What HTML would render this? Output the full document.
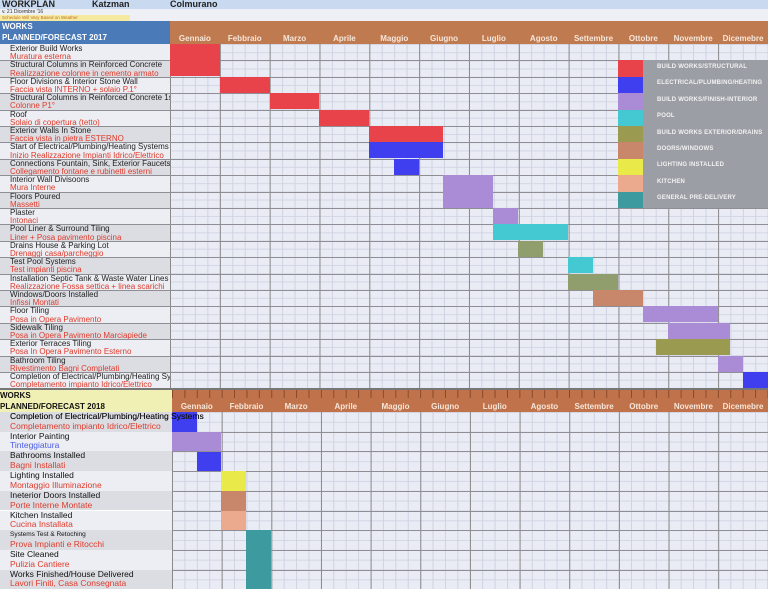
<!DOCTYPE html>
<html><head><meta charset="utf-8"><style>
*{margin:0;padding:0;box-sizing:border-box}
body{width:768px;height:589px;overflow:hidden;background:#fff;position:relative;font-family:"Liberation Sans",Arial,sans-serif}
div{position:absolute}
.grid{background-color:#e9ecf5;
background-image:linear-gradient(to right,#8a8a8a 1px,transparent 1px),linear-gradient(to right,#cfd3e2 1px,transparent 1px),linear-gradient(to bottom,#d3d6e4 1px,transparent 1px);
background-size:49.83px 100%,12.46px 100%,100% 8.2px}
.row{left:0;width:768px;border-top:1px solid #8e8e94}
.lab{left:0;width:170px;font-size:8px;line-height:8.2px;padding-left:10px;padding-top:1px;white-space:nowrap;overflow:hidden}
.lab b{font-weight:normal;color:#222;display:block}
.lab i{font-style:normal;color:#e03a2a;display:block}
.g{background:#dcdde3}.w{background:#eceef3}
.mh{top:21px;height:23px;background:#c07a50;left:170px;width:598px}
.mn{font-size:8px;font-weight:bold;color:#f6e6da;width:49.83px;text-align:center}
.leg{left:643px;width:125px;color:#f2f2f2;font-size:6px;font-weight:bold;padding-left:14px;letter-spacing:.2px;line-height:16.4px}
.lab2{left:0;width:172px;font-size:8.5px;line-height:9.8px;padding-left:10px;white-space:nowrap;overflow:visible;z-index:2}
.lab2 b{font-weight:normal;color:#111;display:block}
.lab2 i{font-style:normal;color:#e03a2a;display:block}
</style></head><body>
<div style="left:0;top:0;width:768px;height:9px;background:#c9daf0"></div>
<div style="left:2px;top:-1px;font-size:9px;font-weight:bold;color:#222">WORKPLAN</div>
<div style="left:92px;top:-1px;font-size:9px;font-weight:bold;color:#222">Katzman</div>
<div style="left:170px;top:-1px;font-size:9px;font-weight:bold;color:#222">Colmurano</div>
<div style="left:0;top:9px;width:768px;height:12px;background:#eef0f6"></div>
<div style="left:2px;top:9px;font-size:5px;color:#333">v. 21 Dicembre '16</div>
<div style="left:0;top:15px;width:130px;height:6px;background:#f5eaa0"></div>
<div style="left:2px;top:15px;font-size:4.5px;color:#c07020">Schedule Will Vary Based on Weather</div>
<div style="left:0;top:21px;width:170px;height:23px;background:#4a7ab8"></div>
<div style="left:2px;top:22px;font-size:8px;font-weight:bold;color:#fff">WORKS</div>
<div style="left:2px;top:33px;font-size:8px;font-weight:bold;color:#fff">PLANNED/FORECAST 2017</div>
<div class="mh"></div>
<div style="top:34px;left:170px;width:598px;display:flex">
<div class="mn" style="position:static">Gennaio</div><div class="mn" style="position:static">Febbraio</div><div class="mn" style="position:static">Marzo</div><div class="mn" style="position:static">Aprile</div><div class="mn" style="position:static">Maggio</div><div class="mn" style="position:static">Giugno</div><div class="mn" style="position:static">Luglio</div><div class="mn" style="position:static">Agosto</div><div class="mn" style="position:static">Settembre</div><div class="mn" style="position:static">Ottobre</div><div class="mn" style="position:static">Novembre</div><div class="mn" style="position:static">Dicemebre</div></div>
<div class="grid" style="left:170px;top:44px;width:598px;height:345px"></div>

<div class="lab w" style="top:44px;height:16.4px"><b>Exterior Build Works</b><i>Muratura esterna</i></div>
<div class="lab g" style="top:60.4px;height:16.4px"><b>Structural Columns in Reinforced Concrete</b><i>Realizzazione colonne in cemento armato</i></div>
<div class="lab w" style="top:76.8px;height:16.4px"><b>Floor Divisions &amp; Interior Stone Wall</b><i>Faccia vista INTERNO + solaio P.1°</i></div>
<div class="lab g" style="top:93.2px;height:16.4px"><b>Structural Columns in Reinforced Concrete 1st F</b><i>Colonne P1°</i></div>
<div class="lab w" style="top:109.6px;height:16.4px"><b>Roof</b><i>Solaio di copertura (tetto)</i></div>
<div class="lab g" style="top:126px;height:16.4px"><b>Exterior Walls In Stone</b><i>Faccia vista in pietra ESTERNO</i></div>
<div class="lab w" style="top:142.4px;height:16.4px"><b>Start of Electrical/Plumbing/Heating Systems</b><i>Inizio Realizzazione Impianti Idrico/Elettrico</i></div>
<div class="lab g" style="top:158.8px;height:16.4px"><b>Connections Fountain, Sink, Exterior Faucets</b><i>Collegamento fontane e rubinetti esterni</i></div>
<div class="lab w" style="top:175.2px;height:16.4px"><b>Interior Wall Divisoons</b><i>Mura Interne</i></div>
<div class="lab g" style="top:191.6px;height:16.4px"><b>Floors Poured</b><i>Massetti</i></div>
<div class="lab w" style="top:208px;height:16.4px"><b>Plaster</b><i>Intonaci</i></div>
<div class="lab g" style="top:224.4px;height:16.4px"><b>Pool Liner &amp; Surround Tiling</b><i>Liner + Posa pavimento piscina</i></div>
<div class="lab w" style="top:240.8px;height:16.4px"><b>Drains House &amp; Parking Lot</b><i>Drenaggi casa/parcheggio</i></div>
<div class="lab g" style="top:257.2px;height:16.4px"><b>Test Pool Systems</b><i>Test impianti piscina</i></div>
<div class="lab w" style="top:273.6px;height:16.4px"><b>Installation Septic Tank &amp; Waste Water Lines</b><i>Realizzazione Fossa settica + linea scarichi</i></div>
<div class="lab g" style="top:290px;height:16.4px"><b>Windows/Doors Installed</b><i>Infissi Montati</i></div>
<div class="lab w" style="top:306.4px;height:16.4px"><b>Floor Tiling</b><i>Posa in Opera Pavimento</i></div>
<div class="lab g" style="top:322.8px;height:16.4px"><b>Sidewalk Tiling</b><i>Posa in Opera Pavimento Marciapiede</i></div>
<div class="lab w" style="top:339.2px;height:16.4px"><b>Exterior Terraces Tiling</b><i>Posa In Opera Pavimento Esterno</i></div>
<div class="lab g" style="top:355.6px;height:16.4px"><b>Bathroom Tiling</b><i>Rivestimento Bagni Completati</i></div>
<div class="lab w" style="top:372px;height:17px"><b>Completion of Electrical/Plumbing/Heating Systems</b><i>Completamento impianto Idrico/Elettrico</i></div>

<div class="row" style="top:60.4px"></div><div class="row" style="top:76.8px"></div><div class="row" style="top:93.2px"></div><div class="row" style="top:109.6px"></div><div class="row" style="top:126px"></div><div class="row" style="top:142.4px"></div><div class="row" style="top:158.8px"></div><div class="row" style="top:175.2px"></div><div class="row" style="top:191.6px"></div><div class="row" style="top:208px"></div><div class="row" style="top:224.4px"></div><div class="row" style="top:240.8px"></div><div class="row" style="top:257.2px"></div><div class="row" style="top:273.6px"></div><div class="row" style="top:290px"></div><div class="row" style="top:306.4px"></div><div class="row" style="top:322.8px"></div><div class="row" style="top:339.2px"></div><div class="row" style="top:355.6px"></div><div class="row" style="top:372px"></div>

<div style="left:170px;top:44px;width:50px;height:32px;background:#e8434b"></div>
<div style="left:220px;top:77px;width:50px;height:16px;background:#e8434b"></div>
<div style="left:270px;top:93px;width:49px;height:16px;background:#e8434b"></div>
<div style="left:319px;top:110px;width:50px;height:16px;background:#e8434b"></div>
<div style="left:369px;top:126px;width:74px;height:16px;background:#e8434b"></div>
<div style="left:369px;top:142px;width:74px;height:16px;background:#3f3ff0"></div>
<div style="left:394px;top:159px;width:25px;height:16px;background:#3f3ff0"></div>
<div style="left:443px;top:175px;width:50px;height:33px;background:#a98bd6"></div>
<div style="left:493px;top:208px;width:25px;height:16px;background:#a98bd6"></div>
<div style="left:493px;top:224px;width:75px;height:16px;background:#44c8d2"></div>
<div style="left:518px;top:241px;width:25px;height:16px;background:#8f9e6c"></div>
<div style="left:568px;top:257px;width:25px;height:16px;background:#44c8d2"></div>
<div style="left:568px;top:274px;width:50px;height:16px;background:#8f9e6c"></div>
<div style="left:593px;top:290px;width:50px;height:16px;background:#c8876a"></div>
<div style="left:643px;top:306px;width:75px;height:16px;background:#a98bd6"></div>
<div style="left:668px;top:323px;width:62px;height:16px;background:#a98bd6"></div>
<div style="left:656px;top:339px;width:74px;height:16px;background:#9a9a50"></div>
<div style="left:718px;top:356px;width:25px;height:16px;background:#a98bd6"></div>
<div style="left:743px;top:372px;width:25px;height:16px;background:#3f3ff0"></div>

<div style="left:643px;top:60.4px;width:125px;height:147.6px;background:#9b9ea4"></div>
<div style="left:618px;top:60.4px;width:25px;height:16.4px;background:#e8434b"></div>
<div style="left:618px;top:76.8px;width:25px;height:16.4px;background:#3f3ff0"></div>
<div style="left:618px;top:93.2px;width:25px;height:16.4px;background:#a98bd6"></div>
<div style="left:618px;top:109.6px;width:25px;height:16.4px;background:#44c8d2"></div>
<div style="left:618px;top:126px;width:25px;height:16.4px;background:#9a9a50"></div>
<div style="left:618px;top:142.4px;width:25px;height:16.4px;background:#c8876a"></div>
<div style="left:618px;top:158.8px;width:25px;height:16.4px;background:#e9e94a"></div>
<div style="left:618px;top:175.2px;width:25px;height:16.4px;background:#eba98e"></div>
<div style="left:618px;top:191.6px;width:25px;height:16.4px;background:#3d9a9f"></div>
<div class="leg" style="top:59px">BUILD WORKS/STRUCTURAL</div>
<div class="leg" style="top:75.4px">ELECTRICAL/PLUMBING/HEATING</div>
<div class="leg" style="top:91.8px">BUILD WORKS/FINISH-INTERIOR</div>
<div class="leg" style="top:108.2px">POOL</div>
<div class="leg" style="top:124.6px">BUILD WORKS EXTERIOR/DRAINS</div>
<div class="leg" style="top:141px">DOORS/WINDOWS</div>
<div class="leg" style="top:157.4px">LIGHTING INSTALLED</div>
<div class="leg" style="top:173.8px">KITCHEN</div>
<div class="leg" style="top:190.2px">GENERAL PRE-DELIVERY</div>

<div style="left:0;top:388px;width:768px;height:2px;background:#777"></div>
<div style="left:0;top:390px;width:172px;height:22px;background:#f1f0b4"></div>
<div style="left:0;top:391px;font-size:8px;font-weight:bold;color:#111">WORKS</div>
<div style="left:0;top:402px;font-size:8px;font-weight:bold;color:#111">PLANNED/FORECAST 2018</div>
<div style="left:172px;top:390px;width:596px;height:22px;background-color:#c0724a;background-image:linear-gradient(to right,#8a4a2a 1px,transparent 1px);background-size:12.42px 8px;background-repeat:repeat-x"></div>
<div style="top:402px;left:172px;width:596px;display:flex">
<div class="mn" style="position:static;width:49.67px">Gennaio</div><div class="mn" style="position:static;width:49.67px">Febbraio</div><div class="mn" style="position:static;width:49.67px">Marzo</div><div class="mn" style="position:static;width:49.67px">Aprile</div><div class="mn" style="position:static;width:49.67px">Maggio</div><div class="mn" style="position:static;width:49.67px">Giugno</div><div class="mn" style="position:static;width:49.67px">Luglio</div><div class="mn" style="position:static;width:49.67px">Agosto</div><div class="mn" style="position:static;width:49.67px">Settembre</div><div class="mn" style="position:static;width:49.67px">Ottobre</div><div class="mn" style="position:static;width:49.67px">Novembre</div><div class="mn" style="position:static;width:49.67px">Dicemebre</div></div>
<div class="grid" style="left:172px;top:412px;width:596px;height:177px;background-size:49.67px 100%,12.42px 100%,100% 9.85px"></div>

<div class="lab2 g" style="top:412px;height:19.7px;width:172px;overflow:visible"><b>Completion of Electrical/Plumbing/Heating Systems</b><i>Completamento impianto Idrico/Elettrico</i></div>
<div class="lab2 w" style="top:431.7px;height:19.7px"><b>Interior Painting</b><i style="color:#4a5ae8">Tinteggiatura</i></div>
<div class="lab2 g" style="top:451.4px;height:19.7px"><b>Bathrooms Installed</b><i>Bagni Installati</i></div>
<div class="lab2 w" style="top:471.1px;height:19.7px"><b>Lighting Installed</b><i>Montaggio Illuminazione</i></div>
<div class="lab2 g" style="top:490.8px;height:19.7px"><b>Ineterior Doors Installed</b><i>Porte Interne Montate</i></div>
<div class="lab2 w" style="top:510.5px;height:19.7px"><b>Kitchen Installed</b><i>Cucina Installata</i></div>
<div class="lab2 g" style="top:530.2px;height:19.7px"><b style="font-size:6.5px">Systems Test &amp; Retoching</b><i>Prova Impianti e Ritocchi</i></div>
<div class="lab2 w" style="top:549.9px;height:19.7px"><b>Site Cleaned</b><i>Pulizia Cantiere</i></div>
<div class="lab2 g" style="top:569.6px;height:19.7px"><b>Works Finished/House Delivered</b><i>Lavori Finiti, Casa Consegnata</i></div>
<div class="row" style="top:431.7px"></div><div class="row" style="top:451.4px"></div><div class="row" style="top:471.1px"></div><div class="row" style="top:490.8px"></div><div class="row" style="top:510.5px"></div><div class="row" style="top:530.2px"></div><div class="row" style="top:549.9px"></div><div class="row" style="top:569.6px"></div>

<div style="left:172px;top:412px;width:25px;height:19.7px;background:#3f3ff0"></div>
<div style="left:172px;top:432px;width:49px;height:19.4px;background:#a98bd6"></div>
<div style="left:197px;top:452px;width:24px;height:19px;background:#3f3ff0"></div>
<div style="left:221px;top:471px;width:25px;height:19.7px;background:#e9e94a"></div>
<div style="left:221px;top:491px;width:25px;height:19.7px;background:#c8876a"></div>
<div style="left:221px;top:510.5px;width:25px;height:19.7px;background:#eba98e"></div>
<div style="left:246px;top:530px;width:25px;height:59px;background:#3d9a9f"></div>
<div style="left:10px;top:412px;font-size:8.5px;line-height:9.8px;color:#111;white-space:nowrap;z-index:3">Completion of Electrical/Plumbing/Heating Systems</div>
</body></html>
